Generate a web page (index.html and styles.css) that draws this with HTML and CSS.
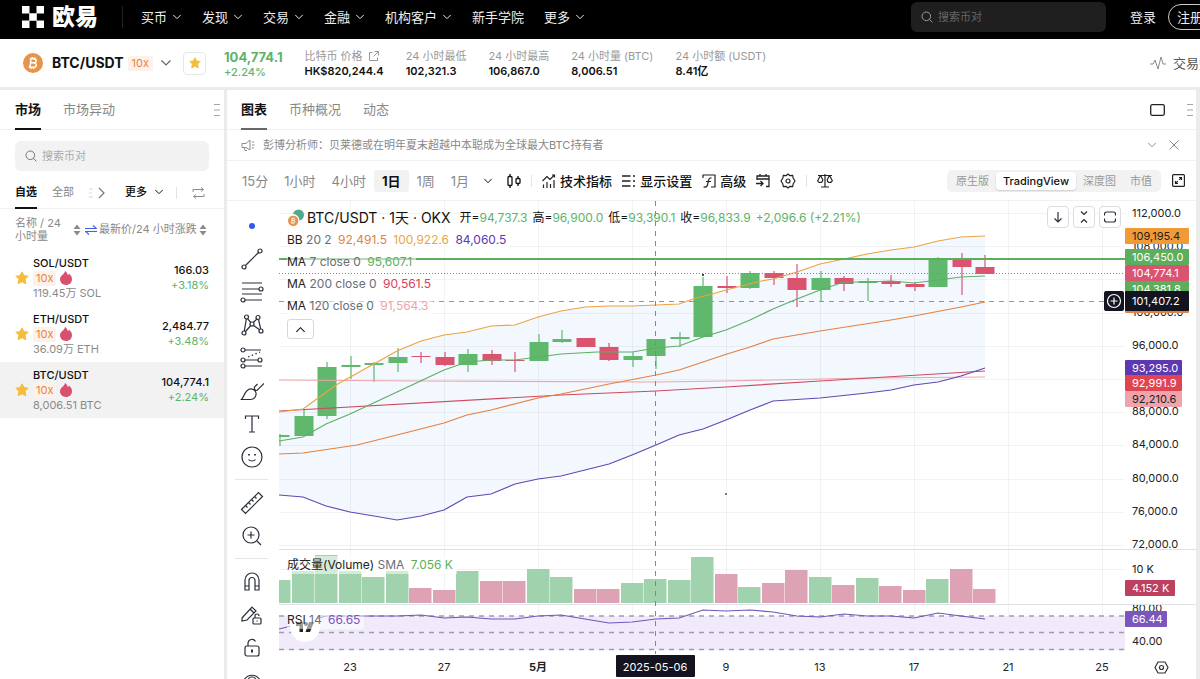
FILE: index.html
```html
<!DOCTYPE html>
<html lang="zh-CN">
<head>
    <meta charset="UTF-8">
    <meta name="viewport" content="width=device-width, initial-scale=1.0">
    <title>BTC/USDT | 欧易</title>
    <link rel="stylesheet" href="styles.css">
</head>
<body>
    <!-- Shared icons -->
    <svg class="sprite" aria-hidden="true">
        <symbol id="chevron" viewBox="0 0 12 12"><path d="M1.5 3.5 6 8l4.5-4.5" fill="none" stroke="currentColor" stroke-width="1.2"/></symbol>
        <symbol id="search" viewBox="0 0 12 12"><circle cx="5.3" cy="5.3" r="4.3" fill="none" stroke="currentColor"/><path d="m8.4 8.4 3 3" stroke="currentColor"/></symbol>
        <symbol id="star" viewBox="0 0 14 14"><path d="M7 .8 8.9 4.6l4.2.6-3 3 .8 4.5L7 10.7l-3.9 2 .8-4.5-3-3 4.2-.6z" fill="#f3bd3e" stroke="#f3bd3e" stroke-linejoin="round"/></symbol>
        <symbol id="flame" viewBox="0 0 12 14"><path d="M5 0c1.500 1 2.500 2.300 2.800 4.200.6-.4.9-.9 1-1.600C10.800 4.200 12 6 12 8.200 12 11.500 9.400 14 6 14s-6-2.500-6-5.700C0 6.200 1.200 5 2.500 3.800 3.800 2.700 4.800 1.600 5 0z" fill="#d9506f"/></symbol>
        <symbol id="sort" viewBox="0 0 8 12"><path d="M4 .5 7.500 5h-7zM4 11.500.5 7h7z" fill="#8a8a8a"/></symbol>
        <symbol id="grip" viewBox="0 0 6 14"><path d="M0 1.500h6M0 7h6M0 12.500h6" stroke="#a5a5a5"/></symbol>
        <symbol id="bitcoin" viewBox="0 0 20 20">
            <circle cx="10" cy="10" r="10" fill="#e8924a"/>
            <path d="m8 5.500-1 9M9.500 4l-.3 1.800M12 4.300l-.3 1.700M8.300 14.200 8 16M10.700 14.300l-.3 1.800M6.800 5.600l4.500.5c2.800.4 2.400 3.700-.4 3.700l-3-.3 3.300.4c3.200.5 2.500 4.500-.8 4.400l-4.700-.4" fill="none" stroke="#fff" stroke-width="1.500"/>
        </symbol>
    </svg>

    <header class="topbar">
        <a class="brand" href="#">
            <svg width="22" height="22" viewBox="0 0 22 22" fill="#fff"><path d="M0 0h7.500v7.500H0zM14.500 0H22v7.500h-7.500zM7.200 7.200h7.600v7.600H7.200zM0 14.500h7.500V22H0zM14.500 14.500H22V22h-7.500z"/></svg>
            <span>欧易</span>
        </a>
        <nav class="nav">
            <a href="#">买币 <svg><use href="#chevron"/></svg></a>
            <a href="#">发现 <svg><use href="#chevron"/></svg></a>
            <a href="#">交易 <svg><use href="#chevron"/></svg></a>
            <a href="#">金融 <svg><use href="#chevron"/></svg></a>
            <a href="#">机构客户 <svg><use href="#chevron"/></svg></a>
            <a href="#">新手学院</a>
            <a href="#">更多 <svg><use href="#chevron"/></svg></a>
        </nav>
        <label class="search dark">
            <svg><use href="#search"/></svg>
            <input type="text" placeholder="搜索币对" aria-label="搜索币对">
        </label>
        <a class="login" href="#">登录</a>
        <button class="register">注册</button>
    </header>

    <section class="ticker">
        <svg class="coin"><use href="#bitcoin"/></svg>
        <h1>BTC/USDT</h1>
        <span class="tag">10x</span>
        <svg class="pair-arrow"><use href="#chevron"/></svg>
        <button class="fav" aria-label="自选"><svg><use href="#star"/></svg></button>
        <div class="stats">
            <div class="last"><strong>104,774.1</strong><span>+2.24%</span></div>
            <div><span>比特币 价格 <svg width="11" height="11" viewBox="0 0 11 11" fill="none" stroke="currentColor"><path d="M4.500 1.500h-3v8h8v-3M6.500.5h4v4M10.500.5l-5 5"/></svg></span><b>HK$820,244.4</b></div>
            <div><span>24 小时最低</span><b>102,321.3</b></div>
            <div><span>24 小时最高</span><b>106,867.0</b></div>
            <div><span>24 小时量 (BTC)</span><b>8,006.51</b></div>
            <div><span>24 小时额 (USDT)</span><b>8.41亿</b></div>
        </div>
        <a class="trade-link" href="#">
            <svg width="16" height="14" viewBox="0 0 16 14" fill="none" stroke="#8a8a8a"><path d="M0 8h3l2-4 3 9 3-12 2 7h3"/></svg>
            交易数据
        </a>
    </section>

    <main class="workspace">
        <aside class="market">
            <div class="tabs">
                <button class="active">市场</button>
                <button>市场异动</button>
                <svg class="grip"><use href="#grip"/></svg>
            </div>
            <label class="search">
                <svg><use href="#search"/></svg>
                <input type="text" placeholder="搜索币对" aria-label="搜索市场币对">
            </label>
            <div class="filters">
                <button class="active">自选</button>
                <button>全部</button>
                <svg class="next" width="18" height="12" viewBox="0 0 18 12" fill="none"><path d="M0 2h4M0 6h3M0 10h4" stroke="#d5d5d5"/><path d="m10 1 5 5-5 5" stroke="#777" stroke-width="1.200"/></svg>
                <button class="more">更多 <svg><use href="#chevron"/></svg></button>
                <i class="divider"></i>
                <svg class="loop" width="13" height="12" viewBox="0 0 13 12" fill="none" stroke="#8a8a8a"><path d="M1 5V2.500h10M9 .5l2.500 2L9 4.500M12 7v2.500H2M4 7.500l-2.500 2 2.500 2"/></svg>
            </div>
            <table class="pairs">
                <thead>
                    <tr>
                        <th class="col-name"><div><span>名称 / 24 小时量</span><svg class="sort"><use href="#sort"/></svg></div></th>
                        <th><div>
                            <svg width="12" height="10" viewBox="0 0 12 10" fill="none" stroke="#3d63e8" stroke-width="1.200"><path d="M0 3.500h11.500L8 .5M12 6.500H.5L4 9.500"/></svg>
                            <span>最新价/24 小时涨跌</span>
                            <svg class="sort"><use href="#sort"/></svg>
                        </div></th>
                    </tr>
                </thead>
                <tbody>
                    <tr>
                        <td><div class="pair"><svg class="star"><use href="#star"/></svg><div><b>SOL/USDT</b><p><span class="tag">10x</span><svg class="flame"><use href="#flame"/></svg></p><small>119.45万 SOL</small></div></div></td>
                        <td class="price"><b>166.03</b><span>+3.18%</span></td>
                    </tr>
                    <tr>
                        <td><div class="pair"><svg class="star"><use href="#star"/></svg><div><b>ETH/USDT</b><p><span class="tag">10x</span><svg class="flame"><use href="#flame"/></svg></p><small>36.09万 ETH</small></div></div></td>
                        <td class="price"><b>2,484.77</b><span>+3.48%</span></td>
                    </tr>
                    <tr class="selected">
                        <td><div class="pair"><svg class="star"><use href="#star"/></svg><div><b>BTC/USDT</b><p><span class="tag">10x</span><svg class="flame"><use href="#flame"/></svg></p><small>8,006.51 BTC</small></div></div></td>
                        <td class="price"><b>104,774.1</b><span>+2.24%</span></td>
                    </tr>
                </tbody>
            </table>
        </aside>

        <section class="panel">
            <div class="tabs">
                <button class="active">图表</button>
                <button>币种概况</button>
                <button>动态</button>
                <svg class="layout" width="15" height="12" viewBox="0 0 15 12"><rect x=".7" y=".7" width="13.600" height="10.600" rx="1.500" fill="none" stroke="#222" stroke-width="1.300"/></svg>
                <svg class="grip"><use href="#grip"/></svg>
            </div>
            <div class="news">
                <svg width="14" height="12" viewBox="0 0 14 12" fill="none" stroke="#8a8a8a"><path d="M9 1v10L5 8.500H1v-4h4zM3 8.500l1 3h2M11 3h2M11 6h2.500M11 9h2"/></svg>
                <a href="#">彭博分析师：贝莱德或在明年夏末超越中本聪成为全球最大BTC持有者</a>
                <button class="icon-btn" aria-label="展开"><svg class="chev"><use href="#chevron"/></svg></button>
                <button class="icon-btn" aria-label="关闭"><svg width="10" height="10" viewBox="0 0 10 10" stroke="#8a8a8a"><path d="m.5.5 9 9M9.500.5l-9 9"/></svg></button>
            </div>
            <div class="toolbar">
                <div class="intervals">
                    <button>15分</button><button>1小时</button><button>4小时</button><button class="active">1日</button><button>1周</button><button>1月</button>
                </div>
                <svg class="chev"><use href="#chevron"/></svg>
                <button class="tool candle" aria-label="K线样式"><svg width="14" height="14" viewBox="0 0 14 14" fill="none" stroke="#111" stroke-width="1.300"><rect x="1" y="2.500" width="4" height="9" rx="1"/><path d="M3 0v2.500M3 11.500V14M11 2v2.500M11 9.500V12"/><rect x="9" y="4.500" width="4" height="5" rx="1"/></svg></button>
                <i class="divider"></i>
                <button class="tool"><svg width="14" height="14" viewBox="0 0 14 14" fill="none" stroke="#222" stroke-width="1.200"><path d="M.5 7 5 2.500l3 3L12.500 1M10 1h2.500v2.500M1.500 14v-3.500M5 14V8M8.500 14v-4M12 14V6"/></svg>技术指标</button>
                <button class="tool"><svg width="14" height="14" viewBox="0 0 14 14" fill="none" stroke="#222" stroke-width="1.300"><path d="M0 2h8.500M0 7h8.500M0 12h8.500M11 2h2M11 7h2M11 12h2"/></svg>显示设置</button>
                <button class="tool"><svg width="14" height="14" viewBox="0 0 14 14" fill="none" stroke="#222" stroke-width="1.200"><path d="M1 4V1h12v12H9M9.500 4C7.500 3.500 7 4.500 6.500 6.500l-1 4.500c-.5 2-1.500 2.500-4 2M4 7.500h5"/></svg>高级</button>
                <button class="tool" aria-label="回放"><svg width="14" height="14" viewBox="0 0 14 14" fill="none" stroke="#222" stroke-width="1.300"><path d="M1 6V2h12v10.500h-3M1 5h12M4 0v2M10 0v2M0 9.500h7M4.500 7 7 9.500 4.500 12"/></svg></button>
                <button class="tool" aria-label="设置"><svg width="16" height="16" viewBox="0 0 16 16" fill="none" stroke="#222" stroke-width="1.200"><path d="M8 1l2 1.700 2.700-.4.400 2.700L15 8l-1.900 3-.4 2.700-2.700-.4L8 15l-2-1.700-2.700.4-.4-2.700L1 8l1.900-3 .4-2.700 2.700.4z" stroke-linejoin="round"/><circle cx="8" cy="8" r="2"/></svg></button>
                <i class="divider"></i>
                <button class="tool" aria-label="对比"><svg width="16" height="14" viewBox="0 0 16 14" fill="none" stroke="#222" stroke-width="1.200"><path d="M1 1.500h14M8 0v12.500M4 13h8M3.500 1.500 1 6M3.500 1.500 6 6M12.500 1.500 10 6M12.500 1.500 15 6M.7 6a2.500 2.500 0 0 0 5 0M10.300 6a2.500 2.500 0 0 0 5 0"/></svg></button>
                <div class="views">
                    <button>原生版</button><button class="active">TradingView</button><button>深度图</button><button>市值</button>
                </div>
                <button class="tool full" aria-label="全屏"><svg width="13" height="13" viewBox="0 0 13 13" fill="none" stroke="#222" stroke-width="1.200"><rect x=".6" y=".6" width="11.800" height="11.800" rx="1"/><path d="M7 3.500h2.500V6M3.500 7v2.500H6M9.500 3.500l-2.300 2.300M3.500 9.500l2.300-2.300"/></svg></button>
            </div>

            <div class="chart">
                <div class="drawing">
                    <button aria-label="光标"><svg viewBox="0 0 24 24"><circle cx="12" cy="12" r="3" fill="#2f5bea" stroke="none"/></svg></button>
                    <button aria-label="趋势线"><svg viewBox="0 0 24 24"><circle cx="4" cy="20" r="2"/><circle cx="20" cy="4" r="2"/><path d="M5.500 18.500l13-13"/></svg></button>
                    <button aria-label="斐波那契"><svg viewBox="0 0 24 24"><path d="M2 3h20M2 9h17M2 14h20M5 20h17"/><circle cx="21" cy="9" r="2"/><circle cx="3" cy="20" r="2"/></svg></button>
                    <button aria-label="形态"><svg viewBox="0 0 24 24"><circle cx="4" cy="20" r="2"/><circle cx="6.500" cy="4" r="2"/><circle cx="12" cy="11" r="2"/><circle cx="18" cy="4.500" r="2"/><circle cx="21" cy="18" r="2"/><path d="m4.300 18 2-12M7.500 5.700l3.300 3.800M13.200 9.500l3.800-3.500M18.500 6.500l2.200 9.500M5.500 18.500l5.300-6M13.500 12.500l6 4.200"/></svg></button>
                    <button aria-label="预测"><svg viewBox="0 0 24 24"><circle cx="3" cy="4" r="2"/><circle cx="3" cy="14" r="2"/><circle cx="20" cy="14" r="2"/><circle cx="3" cy="20" r="2"/><path d="M5 4h16M5 14h13M5 20h17"/><path d="m8 11 12-5" stroke-dasharray="1.500 2.500"/></svg></button>
                    <button aria-label="画笔"><svg viewBox="0 0 24 24"><path d="M1.500 20.500C4 18 4.500 12.500 8.500 10.500c3-1.500 7 .5 7.500 3.500.5 3.500-2 6.500-5.500 6.500zM14.500 8c-.5 2 .5 3.500 2.500 3.500L24 4.500M14.500 8l3-3"/></svg></button>
                    <button aria-label="文字"><svg viewBox="0 0 24 24"><path d="M5.500 7V4h13v3M12 4v16M9 20h6"/></svg></button>
                    <button aria-label="图标"><svg viewBox="0 0 24 24"><circle cx="12" cy="12" r="10"/><path d="M8.500 14.500c1.500 2 5.500 2 7 0"/><path d="M9 9v1.500M15 9v1.500" stroke-width="1.800"/></svg></button>
                    <hr>
                    <button aria-label="测量"><svg viewBox="0 0 24 24"><path d="m1.500 18.500 17-17 4 4-17 17zM5.500 14.500l2 2M8.500 11.500l2 2M11.500 8.500l2 2M14.500 5.500l2 2"/></svg></button>
                    <button aria-label="放大"><svg viewBox="0 0 24 24"><circle cx="11" cy="11" r="8"/><path d="M17 17l4 4M11 7.500v7M7.500 11h7"/></svg></button>
                    <hr>
                    <button aria-label="磁铁"><svg viewBox="0 0 24 24"><path d="M5 20V10a7 7 0 0 1 14 0v10h-4V10.500a3 3 0 0 0-6 0V20zM5 16h4M15 16h4"/></svg></button>
                    <button aria-label="保持绘图"><svg viewBox="0 0 24 24"><path d="m2 15 10-11 4 4L7 17l-5 1zM10 6l4 4"/><rect x="13" y="15" width="8" height="6" rx="1"/><path d="M15 15v-2a2 2 0 0 1 4 0M17 17.500v1"/></svg></button>
                    <button aria-label="锁定"><svg viewBox="0 0 24 24"><rect x="5" y="10" width="14" height="10" rx="2"/><path d="M8 10V7a4 4 0 0 1 7.500-1.500"/><path d="M12 13.500v3" stroke-width="2"/></svg></button>
                    <button aria-label="隐藏"><svg viewBox="0 0 24 24"><path d="M3 13c4-9 14-9 18 0-4 8-14 8-18 0z"/><circle cx="12" cy="12" r="4"/></svg></button>
                </div>

                <div class="plot">
                    <svg id="canvas" class="canvas" role="img" aria-label="BTC/USDT 日线图"></svg>
                    <div class="legend">
                        <div class="legend-title">
                            <svg width="18" height="18" viewBox="0 0 18 18"><circle cx="11.500" cy="6" r="5.500" fill="#52a98c"/><circle cx="6" cy="11.500" r="6.500" fill="#fff"/><g transform="translate(1 6.500) scale(.52)"><use href="#bitcoin" width="20" height="20"/></g></svg>
                            <strong>BTC/USDT · 1天 · OKX</strong>
                            <span>开=<em>94,737.3</em></span><span>高=<em>96,900.0</em></span><span>低=<em>93,390.1</em></span><span>收=<em>96,833.9</em></span><em>+2,096.6 (+2.21%)</em>
                        </div>
                        <div class="row"><b>BB</b> 20 2 <span class="mid">92,491.5</span> <span class="upper">100,922.6</span> <span class="lower">84,060.5</span></div>
                        <div class="row"><b>MA</b> 7 close 0 <span class="green">95,607.1</span></div>
                        <div class="row"><b>MA</b> 200 close 0 <span class="red">90,561.5</span></div>
                        <div class="row"><b>MA</b> 120 close 0 <span class="pink">91,564.3</span></div>
                        <button class="fold" aria-label="收起"><svg><use href="#chevron"/></svg></button>
                    </div>
                    <div class="row volume-legend"><b>成交量(Volume)</b> SMA <span class="green">7.056 K</span></div>
                    <div class="tv-logo"><svg width="18" height="10" viewBox="0 0 18 10" fill="#222"><path d="M0 0h7v10H3.500V4H0zM13 0h5l-4 10H9.500z"/><circle cx="10" cy="2" r="2"/></svg></div>
                    <div class="row rsi-legend"><b>RSI</b> 14 <span class="violet">66.65</span></div>
                    <div class="pane-buttons">
                        <button aria-label="下移"><svg viewBox="0 0 12 12"><path d="M6 1v10M2.500 7.500 6 11l3.500-3.500"/></svg></button>
                        <button aria-label="折叠"><svg viewBox="0 0 12 12"><path d="M3 .5l3 3 3-3M3 11.500l3-3 3 3"/></svg></button>
                        <button aria-label="最大化"><svg viewBox="0 0 12 12"><path d="M.5 4.500V3a2 2 0 0 1 2-2h7a2 2 0 0 1 2 2v1.500M.5 7.500V9a2 2 0 0 0 2 2h7a2 2 0 0 0 2-2V7.500"/></svg></button>
                    </div>
                    <button class="add-alert" aria-label="添加"><svg width="16" height="16" viewBox="0 0 16 16" fill="none" stroke="#fff" stroke-width="1.200"><circle cx="8" cy="8" r="6.500"/><path d="M8 4.500v7M4.500 8h7"/></svg></button>
                </div>
                <svg id="axis" class="axis" role="img" aria-label="价格坐标轴"></svg>
            </div>
        </section>
    </main>

    <script>
        const NS = "http://www.w3.org/2000/svg";
        const canvas = document.getElementById("canvas");
        const axis = document.getElementById("axis");
        const UP = "#5fb86b";
        const DOWN = "#da5470";
        const STEP = 23.5;

        // Body top, body bottom, wick high, wick low, direction, volume height
        const candles = [
            [234, 236, 233, 245, 1, 23], [215, 235, 208, 235, 1, 32], [166, 215, 161, 218, 1, 48],
            [164, 166, 155, 178, 1, 32], [162, 164, 161, 181, 1, 26], [156, 162, 147, 171, 1, 32],
            [155, 156, 151, 162, 0, 15], [156, 164, 151, 165, 0, 13], [153, 164, 148, 171, 1, 32],
            [153, 160, 149, 164, 0, 22], [159, 160, 151, 171, 0, 22], [141, 160, 133, 160, 1, 34],
            [138, 141, 129, 142, 1, 26], [137, 146, 137, 146, 0, 14], [146, 159, 142, 160, 0, 14],
            [155, 159, 151, 166, 1, 20], [138, 155, 138, 168, 1, 24], [136, 138, 131, 146, 1, 23],
            [85, 136, 76, 136, 1, 46], [85, 87, 75, 92, 0, 29], [72, 87, 70, 88, 1, 16],
            [72, 77, 70, 84, 0, 20], [77, 89, 63, 106, 0, 33], [77, 89, 70, 100, 1, 26],
            [77, 83, 75, 90, 0, 18], [80, 82, 77, 100, 1, 25], [80, 83, 74, 86, 0, 17],
            [83, 86, 81, 90, 0, 13], [59, 86, 56, 86, 1, 24], [58, 66, 52, 94, 0, 34],
            [66, 73, 54, 73, 0, 14]
        ];

        const upper = "0,211 24,208 57,184 118,150 142,140 165,134 188,131 212,125 236,124 259,116 282,110 306,106 330,105 353,105 377,104 400,103 414,98 433,93 447,89 482,80 494,78 518,71 541,63 565,58 588,53 612,49 635,46 659,40 682,36 706,35";
        const lower = "706,167 682,175 659,181 635,184 612,189 588,192 541,197 494,200 471,209 447,219 424,228 400,234 377,244 353,254 330,263 306,269 282,275 259,278 236,283 212,293 188,296 165,309 142,315 118,319 95,315 71,311 47,305 24,296 0,294";

        function add(parent, name, attrs, text) {
            const el = document.createElementNS(NS, name);
            for (const key in attrs) el.setAttribute(key, attrs[key]);
            if (text) el.textContent = text;
            parent.appendChild(el);
            return el;
        }

        function hline(y, attrs) {
            add(canvas, "line", { x1: 0, x2: "100%", y1: y, y2: y, ...attrs });
        }

        function curve(points, color, width = 1.2) {
            add(canvas, "polyline", { points, fill: "none", stroke: color, "stroke-width": width });
        }

        function drawGrid() {
            add(canvas, "polygon", { points: upper + " " + lower, fill: "#f3f8fe" });
            for (let i = 3; i < 36; i += 4) {
                const x = Math.round(i * STEP) + 0.5;
                add(canvas, "line", { x1: x, x2: x, y1: 0, y2: 449, class: "grid" });
            }
            for (let i = 0; i < 11; i++) hline(Math.round(12 + i * 33.2) + 0.5, { class: "grid" });
            hline(368.5, { class: "grid" });
            add(canvas, "rect", { x: 0, y: 415, width: "100%", height: 34, fill: "#eee8f9", "fill-opacity": 0.9 });
            hline(348.5, { class: "pane-line" });
            hline(403.5, { class: "pane-line" });
        }

        function drawCandles() {
            candles.forEach(([top, bottom, high, low, up, volume], i) => {
                const x = Math.round(i * STEP) + 1;
                const color = up ? UP : DOWN;
                add(canvas, "rect", { x: x - 12, y: 402 - volume, width: 22.5, height: volume, fill: up ? "#a1d2ae" : "#dda2b4" });
                add(canvas, "line", { x1: x, x2: x, y1: high, y2: low, stroke: color, "stroke-width": 1.2 });
                add(canvas, "rect", { x: x - 9.5, y: top, width: 19, height: bottom - top, fill: color });
            });
        }

        function drawLines() {
            curve("0,179 141,180 377,181 447,180 588,177 706,176", "#eca5ac");
            curve("0,210 282,194 377,190 447,186 541,180 706,170", "#cf4a5c");
            curve("0,253 24,252 78,244 118,234 165,222 188,214 212,209 259,197 282,193 330,183 377,174 400,169 424,161 448,153 471,146 494,138 541,130 612,119 635,115 682,106 706,101", "#e5803f");
            curve(upper, "#eca443");
            curve(lower, "#6147b5");
            curve("0,240 24,236 47,223 71,213 118,191 165,169 188,161 212,159 236,159 259,156 282,153 318,151 353,151 377,147 400,145 424,136 447,129 471,119 494,108 518,98 541,89 565,81 588,81 612,80 635,82 659,79 682,76 706,75", "#5fae64");
            hline(58, { stroke: "#5cae58", "stroke-width": 2 });
            hline(72.5, { stroke: "#d2647c", "stroke-dasharray": "1 2" });
            hline(100.5, { stroke: "#92959d", "stroke-dasharray": "5 5" });
            [415, 431.5, 448.5].forEach(y => hline(y, { stroke: "#a09cac", "stroke-width": 1.5, "stroke-dasharray": "5 5" }));
            curve("0,428 24,422 47,415 118,415 142,414 165,417 188,416 212,418 236,418 259,415 282,414 306,418 330,422 353,421 377,418 400,417 424,409 447,410 471,409 494,411 518,415 541,416 565,413 588,415 612,415 635,417 659,412 682,415 706,418", "#7057bb");
            add(canvas, "line", { x1: 376.5, x2: 376.5, y1: 0, y2: 453, stroke: "#83868f", "stroke-dasharray": "5 5" });
            add(canvas, "circle", { cx: 424, cy: 74, r: 1, fill: "#111" });
            add(canvas, "circle", { cx: 447, cy: 293, r: 1, fill: "#555" });
        }

        function drawTimes() {
            [[71, "23"], [165, "27"], [259, "5月"], [447, "9"], [541, "13"], [635, "17"], [729, "21"], [823, "25"]].forEach(([x, label]) => {
                add(canvas, "text", { x, y: 470, "text-anchor": "middle", class: label === "5月" ? "month" : "" }, label);
            });
            add(canvas, "rect", { x: 337, y: 454, width: 79, height: 22, rx: 1, fill: "#131420" });
            add(canvas, "text", { x: 376, y: 470, "text-anchor": "middle", class: "light" }, "2025-05-06");
        }

        function drawAxis() {
            [[12, "112,000.0"], [45, "108,000.0"], [111, "100,000.0"], [144, "96,000.0"], [210, "88,000.0"], [243, "84,000.0"], [277, "80,000.0"], [310, "76,000.0"], [343, "72,000.0"], [368, "10 K"], [407, "80.00"], [440, "40.00"]].forEach(([y, label]) => {
                add(axis, "text", { x: 7, y: y + 4 }, label);
            });
            [348.5, 403.5].forEach(y => add(axis, "line", { x1: 0, x2: "100%", y1: y, y2: y, class: "pane-line" }));
            // Price tags: center, width, fill, label, text color
            [
                [104, 64, "#e5803f", ""], [35, 64, "#f09b37", "109,195.4", "#222"], [56, 64, "#5cae5c", "106,450.0"],
                [88, 64, "#5cae5c", "104,381.8"], [72, 64, "#da5470", "104,774.1"],
                [167, 57, "#5d38b0", "93,295.0"], [182, 57, "#e04450", "92,991.9"], [198, 57, "#f0a3aa", "92,210.6", "#222"],
                [387, 50, "#bd405e", "4.152 K"], [418, 42, "#7c55bd", "66.44"]
            ].forEach(([y, width, fill, label, color]) => {
                add(axis, "rect", { x: 0, y: y - 8, width, height: 16, rx: 1, fill });
                add(axis, "text", { x: 7, y: y + 4, style: "fill:" + (color || "#fff") }, label);
            });
            add(axis, "rect", { x: 0, y: 90, width: 64, height: 20, rx: 1, fill: "#131420" });
            add(axis, "text", { x: 7, y: 104, class: "light" }, "101,407.2");
            add(axis, "path", { d: "M33 461h7l3 5.500-3 5.500h-7l-3-5.500z", fill: "none", stroke: "#333", "stroke-width": 1.2 });
            add(axis, "circle", { cx: 36.5, cy: 466.5, r: 2, fill: "none", stroke: "#333", "stroke-width": 1.2 });
        }

        drawGrid();
        drawCandles();
        drawLines();
        drawTimes();
        drawAxis();
    </script>
</body>
</html>
```
FILE: styles.css
```css
* {
    box-sizing: border-box;
}

body {
    margin: 0;
    height: 100vh;
    overflow: hidden;
    display: flex;
    flex-direction: column;
    background: #ebebeb;
    color: #111;
    font-family: Inter, "Noto Sans CJK SC", sans-serif;
    font-size: 13px;
    line-height: 18px;
}

button,
input {
    font: inherit;
    color: inherit;
    border: none;
    background: none;
    padding: 0;
    margin: 0;
}

button {
    cursor: pointer;
    white-space: nowrap;
}

a {
    color: inherit;
    text-decoration: none;
}

svg {
    flex-shrink: 0;
    display: block;
}

.sprite {
    position: absolute;
    width: 0;
    height: 0;
}

/* Top bar */
.topbar {
    display: flex;
    align-items: center;
    flex-shrink: 0;
    height: 39px;
    padding: 0 0 6px 22px;
    background: #000;
    color: #eee;
    white-space: nowrap;
    overflow: hidden;
}

.brand {
    display: flex;
    align-items: center;
    gap: 8px;
    padding-right: 24px;
    border-right: 1px solid #222;
    color: #fff;
    font-size: 23px;
    font-weight: 900;
    line-height: 22px;
}

.nav {
    display: flex;
    gap: 20px;
    margin-left: 18px;
}

.nav a {
    display: flex;
    align-items: center;
    gap: 5px;
}

.nav svg {
    width: 10px;
    height: 10px;
}

.search {
    display: flex;
    align-items: center;
    gap: 5px;
    height: 30px;
    margin: 11px 15px 0;
    padding: 0 10px;
    border-radius: 6px;
    background: #f2f2f2;
    color: #777;
    font-size: 11px;
}

.search svg {
    width: 12px;
    height: 12px;
}

.search input {
    flex: 1;
    width: 0;
    min-width: 0;
    outline: none;
}

.search input::placeholder {
    color: #aaa;
}

.search.dark {
    width: 195px;
    margin: 0 24px 0 auto;
    background: #1f1f1f;
    color: #999;
}

.search.dark input::placeholder {
    color: #666;
}

.register {
    height: 26px;
    margin: 0 -12px 0 12px;
    padding: 0 8px;
    border: 1px solid #ccc;
    border-radius: 13px;
}

/* Ticker */
.ticker {
    display: flex;
    align-items: center;
    flex-shrink: 0;
    height: 48px;
    padding-left: 23px;
    background: #fff;
    white-space: nowrap;
    overflow: hidden;
}

.coin {
    width: 20px;
    height: 20px;
}

.ticker h1 {
    margin: 0 4px 0 9px;
    font-size: 14px;
    font-weight: 700;
}

.tag {
    padding: 0 3px;
    border-radius: 2px;
    background: #fdf1ea;
    color: #e8823f;
    font-size: 11px;
    line-height: 15px;
}

.ticker .tag {
    padding: 0 4px;
}

.pair-arrow {
    width: 12px;
    height: 12px;
    margin: 0 11px 0 7px;
    color: #666;
}

.fav {
    display: grid;
    place-items: center;
    width: 23px;
    height: 23px;
    border: 1px solid #e8e8e8;
    border-radius: 4px;
}

.fav svg {
    width: 12px;
    height: 12px;
}

.stats {
    display: flex;
    gap: 22px;
    margin-left: 18px;
    padding-top: 2px;
    font-size: 11px;
    line-height: 15px;
}

.stats > div {
    display: flex;
    flex-direction: column;
}

.stats span {
    display: flex;
    align-items: center;
    gap: 5px;
    color: #999;
}

.stats b {
    font-weight: 600;
}

.stats .last strong {
    color: #5cb368;
    font-size: 13px;
    line-height: 16px;
}

.stats .last span {
    color: #5cb368;
    font-weight: 500;
}

.trade-link {
    display: flex;
    align-items: center;
    gap: 7px;
    margin: 0 -25px 0 auto;
    color: #555;
}

/* Workspace */
.workspace {
    display: flex;
    flex: 1;
    gap: 3px;
    min-height: 0;
    padding: 3px 4px 0 0;
}

.market {
    flex: 0 0 224px;
    min-width: 0;
    background: #fff;
}

.tabs {
    display: flex;
    align-items: center;
    gap: 22px;
    height: 40px;
    padding: 0 4px 0 15px;
    border-bottom: 1px solid #f0f0f0;
}

.tabs button {
    height: 40px;
    border-bottom: 2px solid transparent;
    color: #888;
}

.tabs button.active,
.filters button.active {
    border-color: #111;
    color: #111;
    font-weight: 700;
}

.grip {
    width: 6px;
    height: 14px;
    margin-left: auto;
}

.filters {
    display: flex;
    align-items: center;
    height: 31px;
    margin-top: 7px;
    padding: 0 19px 0 15px;
    border-bottom: 1px solid #f0f0f0;
    font-size: 11px;
}

.filters button {
    height: 31px;
    margin-right: 15px;
    border-bottom: 2px solid transparent;
    color: #888;
}

.filters .next {
    margin-right: 18px;
}

.filters .more {
    display: flex;
    align-items: center;
    gap: 7px;
    margin: 0;
    color: #111;
    font-weight: 500;
}

.filters .more svg {
    width: 10px;
    height: 10px;
}

.filters .divider {
    margin: 0 0 0 12px;
}

.filters .loop {
    margin-left: auto;
}

.pairs {
    width: 100%;
    table-layout: fixed;
    border-collapse: collapse;
    font-size: 11px;
    white-space: nowrap;
}

.pairs th {
    height: 41px;
    padding: 0;
    color: #888;
    font-weight: 400;
    line-height: 13px;
    text-align: left;
}

.pairs th div {
    display: flex;
    align-items: center;
    gap: 2px;
}

.pairs .col-name {
    width: 85px;
    padding-left: 15px;
    white-space: normal;
}

.col-name div {
    justify-content: space-between;
    padding-right: 4px;
}

.col-name span {
    width: 52px;
}

.sort {
    width: 8px;
    height: 12px;
}

.pairs td {
    height: 56px;
    padding: 0;
}

.pairs .selected {
    background: #f2f2f2;
}

.pair {
    display: flex;
    align-items: center;
    gap: 4px;
    padding-left: 15px;
    line-height: 15px;
}

.pair .star {
    width: 14px;
    height: 14px;
}

.pair b,
.price b {
    display: block;
    font-weight: 500;
}

.pair p {
    display: flex;
    align-items: center;
    gap: 4px;
    margin: 0;
}

.pair small {
    display: block;
    color: #8a8a8a;
    font-size: 11px;
}

.pair .flame {
    width: 12px;
    height: 14px;
}

.pairs .price {
    padding-right: 15px;
    text-align: right;
    line-height: 15px;
}

.price span {
    color: #5cb368;
}

/* Chart panel */
.panel {
    flex: 1;
    min-width: 0;
    display: flex;
    flex-direction: column;
    background: #fff;
}

.panel .tabs {
    flex-shrink: 0;
    padding: 0 3px 0 14px;
}

.panel .tabs .active {
    border-color: #666;
}

.panel .layout {
    margin-left: auto;
}

.panel .grip {
    margin-left: 0;
}

.news {
    display: flex;
    align-items: center;
    flex-shrink: 0;
    gap: 8px;
    height: 31px;
    padding: 0 17px 0 14px;
    border-bottom: 1px solid #f0f0f0;
    color: #888;
    font-size: 11px;
}

.news a {
    flex: 1;
}

.icon-btn + .icon-btn {
    margin-left: 4px;
}

.chev {
    width: 10px;
    height: 10px;
}

.toolbar {
    display: flex;
    align-items: center;
    flex-shrink: 0;
    height: 40px;
    padding: 0 11px 0 7px;
    border-bottom: 1px solid #f0f0f0;
    white-space: nowrap;
}

.intervals {
    display: flex;
    margin-right: 6px;
    color: #888;
}

.intervals button {
    height: 22px;
    padding: 0 8px;
    border-radius: 3px;
}

.intervals .active {
    background: #f2f2f2;
    color: #111;
    font-weight: 700;
}

.tool {
    display: flex;
    align-items: center;
    gap: 4px;
    margin-right: 10px;
    font-weight: 500;
}

.tool.candle {
    margin-left: 14px;
}

.divider {
    width: 1px;
    height: 12px;
    margin-right: 10px;
    background: #e3e3e3;
}

.views {
    display: flex;
    align-items: center;
    height: 22px;
    margin: 0 11px 0 auto;
    padding: 2px;
    border-radius: 5px;
    background: #f2f2f2;
    color: #999;
    font-size: 11px;
}

.views button {
    height: 18px;
    padding: 0 7px;
    border-radius: 4px;
}

.views .active {
    background: #fff;
    color: #111;
    font-weight: 500;
    box-shadow: 0 1px 2px rgba(0, 0, 0, 0.15);
}

.tool.full {
    margin-right: 0;
}

.chart {
    display: flex;
    flex: 1;
    min-height: 0;
    overflow: hidden;
}

.drawing {
    flex: 0 0 52px;
    display: flex;
    flex-direction: column;
    align-items: center;
    padding: 8px 3px 0 0;
}

.drawing button {
    flex: 0 0 33px;
}

.drawing svg {
    width: 24px;
    height: 24px;
    fill: none;
    stroke: #2a2e39;
    stroke-width: 1.2;
}

.drawing hr {
    flex: 0 0 1px;
    width: 33px;
    margin: 6px 0;
    border: none;
    background: #e5e5e8;
}

.plot {
    position: relative;
    flex: 1;
    min-width: 0;
}

.canvas {
    width: 100%;
    height: 478px;
}

.axis {
    flex: 0 0 71px;
    width: 71px;
    height: 478px;
}

.canvas text,
.axis text {
    fill: #222;
    font-size: 11px;
}

.canvas .month {
    font-weight: 700;
}

.canvas .light,
.axis .light {
    fill: #fff;
}

.grid {
    stroke: #2a2e39;
    stroke-opacity: 0.06;
}

.pane-line {
    stroke: #e0e1e6;
}

/* Overlays on the plot */
.legend {
    position: absolute;
    top: 5px;
    left: 8px;
}

.legend-title {
    display: flex;
    align-items: center;
    gap: 5px;
    height: 24px;
    font-size: 12px;
    white-space: nowrap;
}

.legend-title svg {
    margin-right: -3px;
}

.legend-title strong {
    margin-right: 4px;
    font-size: 14px;
    font-weight: 400;
}

.legend em {
    color: #5cb368;
    font-style: normal;
}

.row {
    width: fit-content;
    height: 18px;
    margin-bottom: 4px;
    padding-right: 4px;
    background: rgba(255, 255, 255, 0.55);
    color: #6a6d78;
    font-size: 12px;
    line-height: 18px;
    white-space: nowrap;
}

.row b {
    color: #222;
    font-weight: 400;
}

.row span {
    margin-left: 3px;
}

.row .mid {
    color: #e5803f;
}

.row .upper {
    color: #eca443;
}

.row .lower {
    color: #5d38b0;
}

.row .green {
    color: #5cae5c;
}

.row .red {
    color: #da4058;
}

.row .pink {
    color: #f0a3aa;
}

.row .violet {
    color: #7c55bd;
}

.fold {
    display: grid;
    place-items: center;
    width: 27px;
    height: 20px;
    border: 1px solid #d8d8dc;
    border-radius: 3px;
    background: #fff;
}

.fold svg {
    width: 11px;
    height: 11px;
    transform: rotate(180deg);
}

.volume-legend {
    position: absolute;
    top: 355px;
    left: 8px;
}

.rsi-legend {
    position: absolute;
    top: 410px;
    left: 8px;
}

.tv-logo {
    position: absolute;
    top: 411px;
    left: 11px;
    display: grid;
    place-items: center;
    width: 30px;
    height: 30px;
    border-radius: 50%;
    background: #fff;
}

.legend-title + .row {
    margin-top: 1px;
}

.pane-buttons {
    position: absolute;
    top: 5px;
    right: 4px;
    display: flex;
    gap: 4px;
}

.pane-buttons button {
    display: grid;
    place-items: center;
    width: 22px;
    height: 22px;
    border: 1px solid #dcdce0;
    border-radius: 4px;
    background: #fff;
}

.pane-buttons svg {
    width: 12px;
    height: 12px;
    fill: none;
    stroke: #2a2e39;
    stroke-width: 1.2;
}

.add-alert {
    position: absolute;
    top: 90px;
    right: 1px;
    display: grid;
    place-items: center;
    width: 20px;
    height: 20px;
    border-radius: 2px;
    background: #131420;
}
```
